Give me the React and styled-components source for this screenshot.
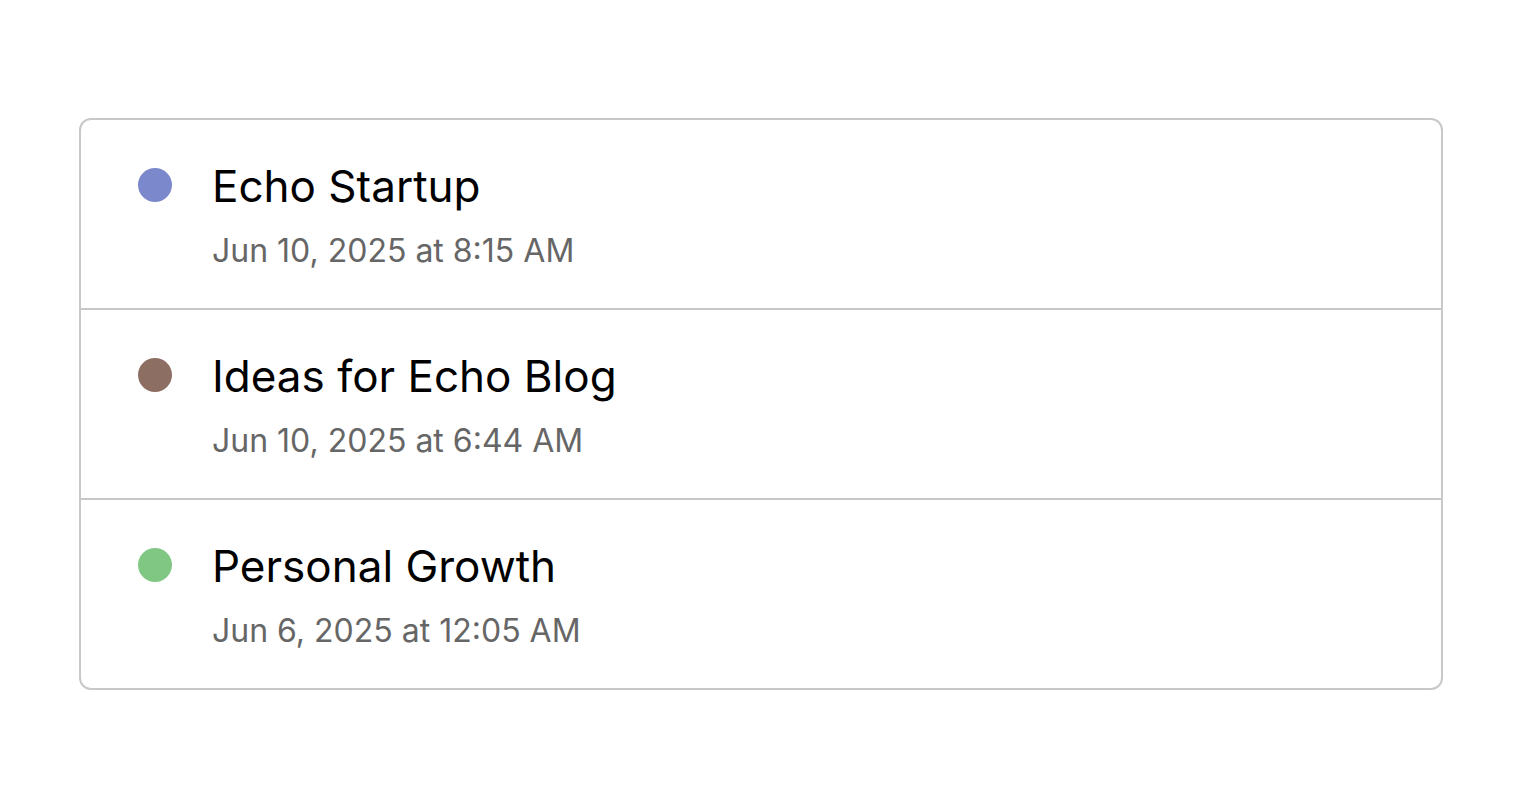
import React from "react";
import styled, { createGlobalStyle } from "styled-components";

const Global = createGlobalStyle`
  html, body { margin: 0; padding: 0; background: #ffffff; }
  body { font-family: Inter, "Noto Sans", sans-serif; }
`;

const Page = styled.div`
  padding: 118px 79px 118px;
  box-sizing: border-box;
  width: 1522px;
`;

const Card = styled.ul`
  list-style: none;
  margin: 0;
  padding: 0;
  border: 2px solid #c8c8c8;
  border-radius: 12px;
  overflow: hidden;
`;

const Row = styled.li`
  display: flex;
  align-items: flex-start;
  gap: 40px;
  height: 188px;
  padding: 0 57px;
  & + & { border-top: 2px solid #c8c8c8; }
`;

const Dot = styled.span`
  flex: none;
  width: 34px;
  height: 34px;
  border-radius: 50%;
  background: ${(p) => p.$color};
  margin-top: 48px;
`;

const Texts = styled.div`
  display: flex;
  flex-direction: column;
  padding-top: 40px;
`;

const Title = styled.div`
  font-size: 44px;
  line-height: 52px;
  color: #000;
  font-weight: 400;
`;

const DateLine = styled.div`
  margin-top: 21px;
  font-size: 32px;
  line-height: 36px;
  color: #666666;
  font-weight: 400;
`;

const items = [
  { title: "Echo Startup", date: "Jun 10, 2025 at 8:15 AM", color: "#7b88cc" },
  { title: "Ideas for Echo Blog", date: "Jun 10, 2025 at 6:44 AM", color: "#8d6e63" },
  { title: "Personal Growth", date: "Jun 6, 2025 at 12:05 AM", color: "#81c784" },
];

export default function App() {
  return (
    <>
      <Global />
      <Page>
        <Card>
          {items.map((it) => (
            <Row key={it.title}>
              <Dot $color={it.color} />
              <Texts>
                <Title>{it.title}</Title>
                <DateLine>{it.date}</DateLine>
              </Texts>
            </Row>
          ))}
        </Card>
      </Page>
    </>
  );
}
